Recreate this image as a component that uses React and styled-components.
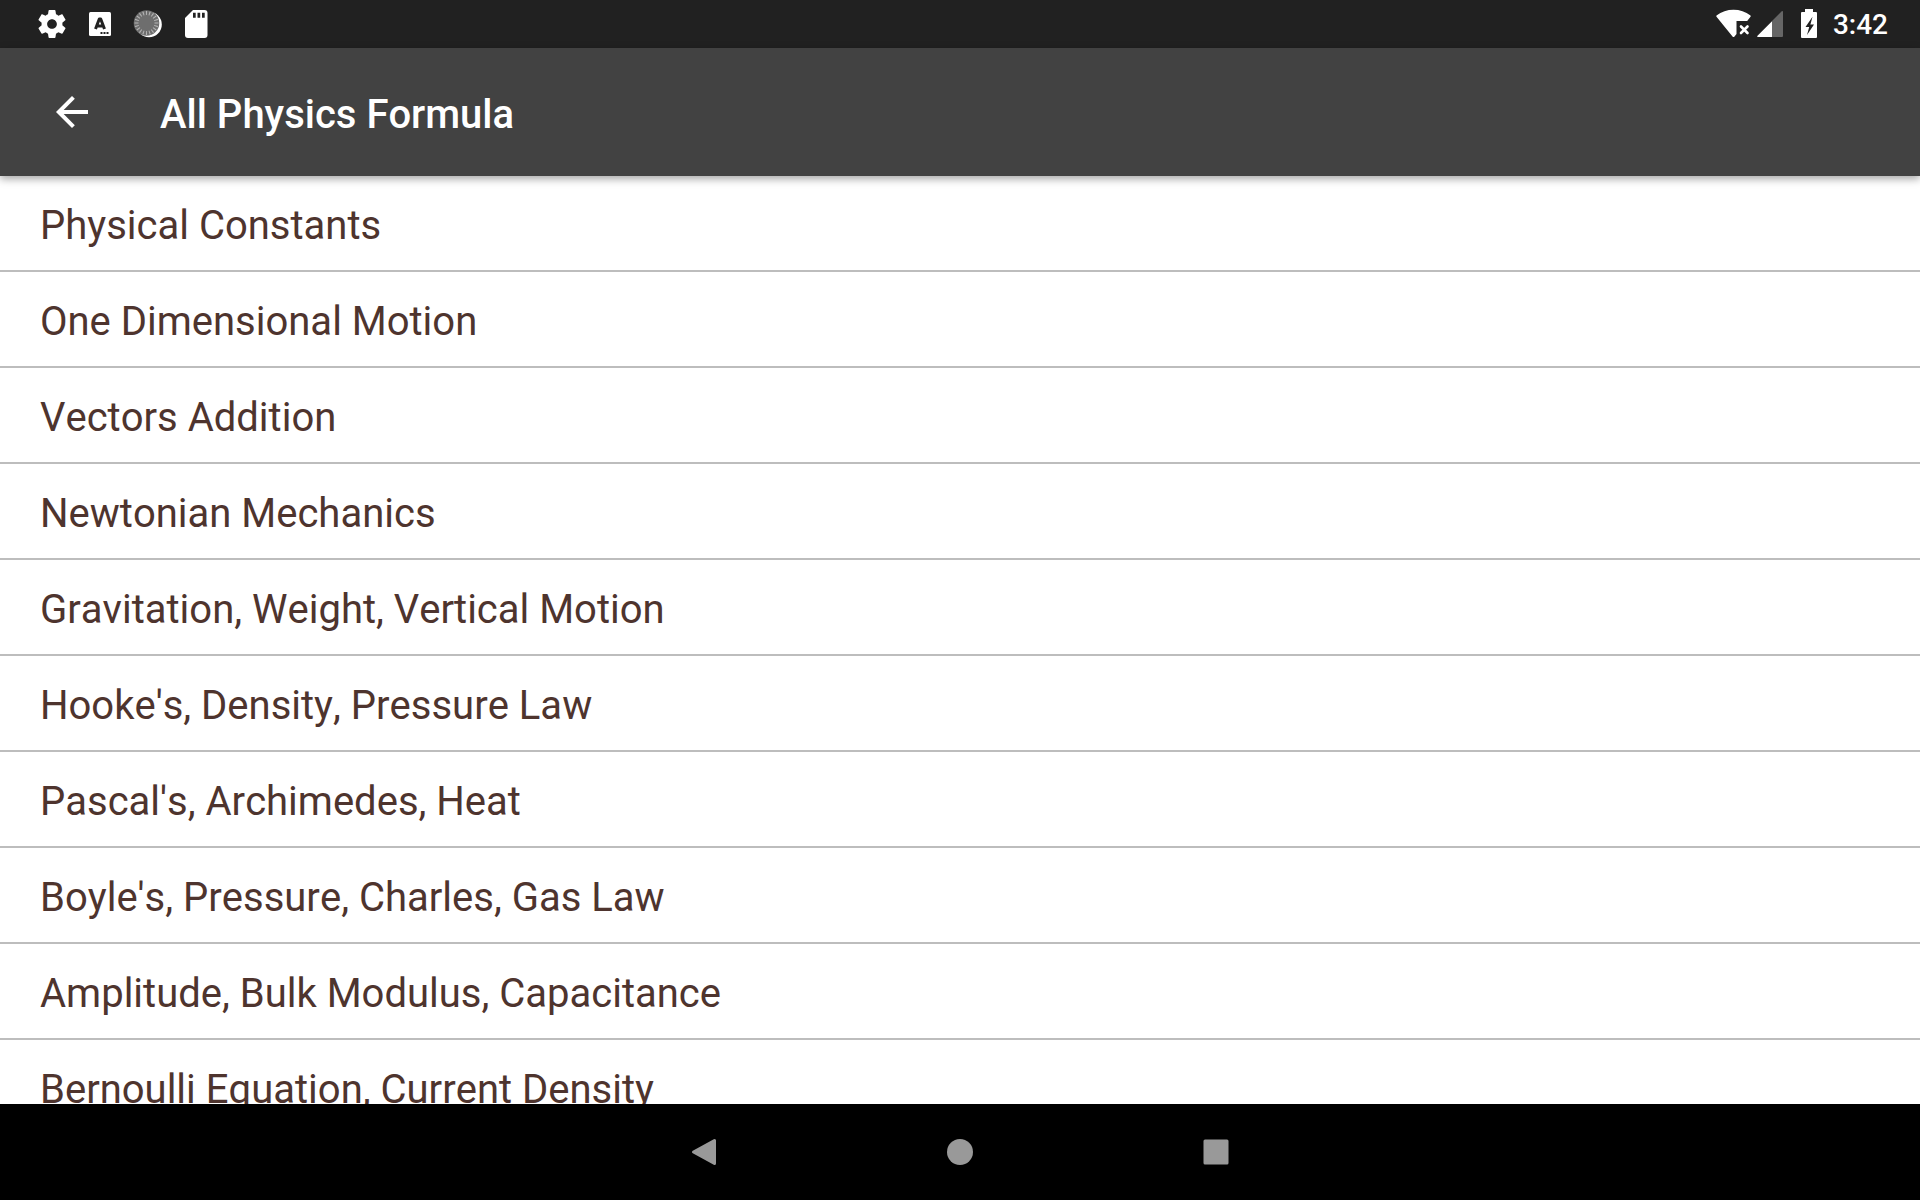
import styled, { createGlobalStyle } from "styled-components";

const GlobalStyle = createGlobalStyle`
  * {
    box-sizing: border-box;
  }
  body {
    margin: 0;
    background-color: white;
    font-family: Roboto, "Liberation Sans", sans-serif;
    font-kerning: none;
  }
`;

const Container = styled.div`
  display: flex;
  flex-direction: column;
  height: 100vh;
  overflow: hidden;
`;

const StatusBar = styled.div`
  display: flex;
  align-items: center;
  justify-content: space-between;
  flex-shrink: 0;
  height: 48px;
  padding: 0 32px 0 36px;
  background-color: #212121;
  color: white;
`;

const StatusGroup = styled.div`
  display: flex;
  align-items: center;
  gap: ${(props) => props.$gap};
`;

const Icon = styled.svg`
  display: block;
  flex-shrink: 0;
`;

const Clock = styled.span`
  margin-left: 4px;
  padding-top: 2px;
  font-size: 28px;
  font-weight: 500;
  line-height: 32px;
`;

const AppBar = styled.header`
  display: flex;
  align-items: center;
  flex-shrink: 0;
  gap: 64px;
  height: 128px;
  padding: 0 48px;
  background-color: #424242;
  color: white;
  box-shadow: 0 3px 8px rgba(0, 0, 0, 0.35);
  z-index: 1;
`;

const BackButton = styled.button`
  display: flex;
  padding: 0;
  border: none;
  background: none;
  color: inherit;
  cursor: pointer;
`;

const Title = styled.h1`
  margin: 0;
  padding-top: 6px;
  font-size: 40px;
  font-weight: 500;
  line-height: 48px;
`;

const List = styled.ul`
  flex: 1;
  min-height: 0;
  margin: 0;
  padding: 0;
  overflow: hidden;
  list-style: none;
`;

const Item = styled.li`
  border-bottom: 2px solid #bdbdbd;
`;

const ItemLink = styled.a`
  display: block;
  padding: 26px 40px 20px;
  color: #4e342e;
  font-size: 40px;
  line-height: 48px;
  text-decoration: none;
`;

const NavBar = styled.nav`
  display: flex;
  align-items: center;
  justify-content: center;
  flex-shrink: 0;
  gap: 208px;
  height: 96px;
  background-color: black;
`;

const NavButton = styled.button`
  display: flex;
  padding: 0;
  border: none;
  background: none;
  color: #999999;
  cursor: pointer;
`;

const topics = [
  "Physical Constants",
  "One Dimensional Motion",
  "Vectors Addition",
  "Newtonian Mechanics",
  "Gravitation, Weight, Vertical Motion",
  "Hooke's, Density, Pressure Law",
  "Pascal's, Archimedes, Heat",
  "Boyle's, Pressure, Charles, Gas Law",
  "Amplitude, Bulk Modulus, Capacitance",
  "Bernoulli Equation, Current Density",
];

const GearIcon = () => (
  <Icon width="32" height="32" viewBox="0.5 0.5 23 23" fill="currentColor">
    <path d="M19.43 12.98c.04-.32.07-.64.07-.98s-.03-.66-.07-.98l2.11-1.65c.19-.15.24-.42.12-.64l-2-3.46c-.12-.22-.39-.3-.61-.22l-2.49 1c-.52-.4-1.08-.73-1.69-.98l-.38-2.65C14.46 2.18 14.25 2 14 2h-4c-.25 0-.46.18-.49.42l-.38 2.65c-.61.25-1.17.59-1.69.98l-2.49-1c-.23-.09-.49 0-.61.22l-2 3.46c-.13.22-.07.49.12.64l2.11 1.65c-.04.32-.07.65-.07.98s.03.66.07.98l-2.11 1.65c-.19.15-.24.42-.12.64l2 3.46c.12.22.39.3.61.22l2.49-1c.52.4 1.08.73 1.69.98l.38 2.65c.03.24.24.42.49.42h4c.25 0 .46-.18.49-.42l.38-2.65c.61-.25 1.17-.59 1.69-.98l2.49 1c.23.09.49 0 .61-.22l2-3.46c.12-.22.07-.49-.12-.64l-2.11-1.65zM12 15.5c-1.93 0-3.5-1.57-3.5-3.5s1.57-3.5 3.5-3.5 3.5 1.57 3.5 3.5-1.57 3.5-3.5 3.5z" />
  </Icon>
);

const KeyboardIcon = () => (
  <Icon width="32" height="32" viewBox="0 0 32 32">
    <rect x="5" y="4" width="22" height="24" rx="1.5" fill="currentColor" />
    <path
      d="M11.5 21 15.3 11h1.4L20.500 21M13 18h6"
      fill="none"
      stroke="#212121"
      strokeWidth="3"
      strokeLinejoin="round"
    />
    <path
      d="M16.500 24h2v2h-2zM19.500 24h2v2h-2zM22.500 24h2v2h-2z"
      fill="#212121"
    />
  </Icon>
);

const SpinnerIcon = () => (
  <Icon width="32" height="32" viewBox="0 0 32 32">
    <circle cx="17" cy="16.5" r="12.8" fill="white" />
    <circle cx="14.5" cy="15" r="12.8" fill="#6e6e6e" />
    <circle
      cx="14.5"
      cy="15"
      r="10"
      pathLength="60"
      fill="none"
      stroke="#b5b5b5"
      strokeWidth="4"
      strokeDasharray="1 2"
      strokeDashoffset="0.5"
    />
  </Icon>
);

const SdCardIcon = () => (
  <Icon width="32" height="32" viewBox="0 0 32 32">
    <path
      d="M13 2h11.500a3 3 0 0 1 3 3v22a3 3 0 0 1-3 3H8a3 3 0 0 1-3-3V10z"
      fill="currentColor"
    />
    <path
      d="M13 4.700h2.700v5H13zM17.500 4.700h2.700v5h-2.700zM22 4.700h2.700v5H22z"
      fill="#212121"
    />
  </Icon>
);

const WifiIcon = () => (
  <Icon width="40" height="32" viewBox="0 0 40 32">
    <path
      d="M3.500 7.500Q11 1.700 20.500 1.700T37.500 7.500Q38 8.200 37.500 8.800L34.200 12.900H23.500V26L21.500 28.600Q20.500 29.600 19.500 28.600L3.500 8.800Q3 8.200 3.500 7.500z"
      fill="currentColor"
    />
    <path
      d="M28 18.500l6.500 6.500M34.500 18.500l-6.500 6.500"
      stroke="currentColor"
      strokeWidth="2.6"
      strokeLinecap="round"
    />
  </Icon>
);

const SignalIcon = () => (
  <Icon width="32" height="32" viewBox="0 0 32 32">
    <path d="M24.500 3.500Q26 2.500 26 4v24q0 1-1 1H15V13z" fill="#666666" />
    <path d="M15 13.200V29H1Q-.5 29 .5 27.700z" fill="currentColor" />
  </Icon>
);

const BatteryIcon = () => (
  <Icon width="32" height="32" viewBox="0 0 32 32">
    <path
      d="M12 1h8v3h3q1 0 1 1v24q0 1-1 1H9q-1 0-1-1V5q0-1 1-1h3z"
      fill="currentColor"
    />
    <path d="M19.500 8.800 12.500 19h3.700L14 27l7-10.500h-3.600z" fill="#212121" />
  </Icon>
);

const App = () => {
  return (
    <Container>
      <GlobalStyle />
      <StatusBar>
        <StatusGroup $gap="16px">
          <GearIcon />
          <KeyboardIcon />
          <SpinnerIcon />
          <SdCardIcon />
        </StatusGroup>
        <StatusGroup $gap="4px">
          <WifiIcon />
          <SignalIcon />
          <BatteryIcon />
          <Clock>3:42</Clock>
        </StatusGroup>
      </StatusBar>
      <AppBar>
        <BackButton aria-label="Back">
          <Icon width="48" height="48" viewBox="0 0 24 24" fill="currentColor">
            <path d="M20 11H7.83l5.59-5.59L12 4l-8 8 8 8 1.41-1.41L7.83 13H20v-2z" />
          </Icon>
        </BackButton>
        <Title>All Physics Formula</Title>
      </AppBar>
      <List>
        {topics.map((topic) => (
          <Item key={topic}>
            <ItemLink href="#">{topic}</ItemLink>
          </Item>
        ))}
      </List>
      <NavBar>
        <NavButton aria-label="Back">
          <Icon width="48" height="48" viewBox="0 0 48 48">
            <path
              d="M13.500 24 34.500 12.500v23z"
              fill="currentColor"
              stroke="currentColor"
              strokeWidth="3"
              strokeLinejoin="round"
            />
          </Icon>
        </NavButton>
        <NavButton aria-label="Home">
          <Icon width="48" height="48" viewBox="0 0 48 48">
            <circle cx="24" cy="24" r="13" fill="currentColor" />
          </Icon>
        </NavButton>
        <NavButton aria-label="Recent apps">
          <Icon width="48" height="48" viewBox="0 0 48 48">
            <rect
              x="11.5"
              y="11.5"
              width="25"
              height="25"
              rx="1.5"
              fill="currentColor"
            />
          </Icon>
        </NavButton>
      </NavBar>
    </Container>
  );
};

export default App;
